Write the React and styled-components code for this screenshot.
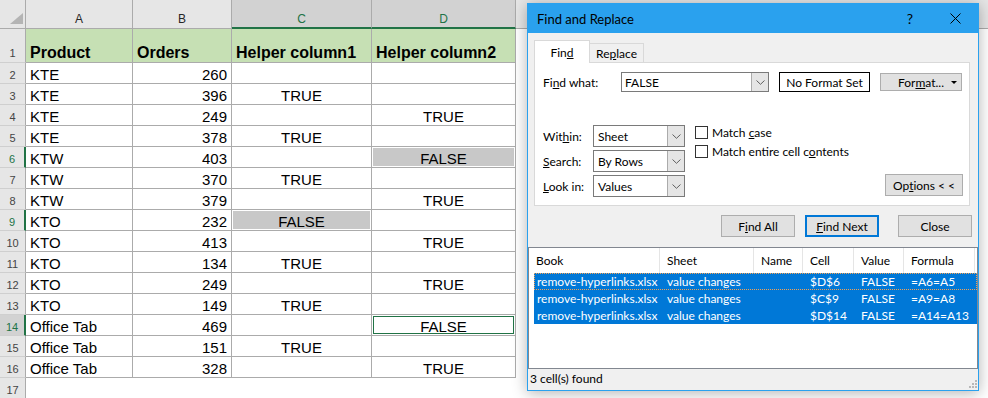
import React from 'react';
import styled, { createGlobalStyle, css } from 'styled-components';

const GlobalStyle = createGlobalStyle`
  html, body {
    margin: 0;
    padding: 0;
    background: #fff;
  }
`;

const Page = styled.div`
  position: relative;
  width: 988px;
  height: 398px;
  overflow: hidden;
  background: #fff;
`;

// ---------- spreadsheet ----------

const Sheet = styled.div`
  display: grid;
  grid-template-columns: 26px 107px 99px 140px 144px 1fr;
  grid-template-rows: 29px 34px repeat(16, 21px);
  font-family: "Liberation Sans", Arial, sans-serif;
  color: #000;
`;

const Corner = styled.div`
  background: #e6e6e6;
  border-right: 1px solid #ababab;
  border-bottom: 1px solid #ababab;
  display: flex;
  align-items: flex-end;
  justify-content: flex-end;
  padding: 0 2px 4px 0;
`;

const ColHead = styled.div`
  background: ${({ $active }) => ($active ? '#d2d2d2' : '#e6e6e6')};
  color: ${({ $active }) => ($active ? '#217346' : '#262626')};
  border-right: ${({ $last }) => ($last ? '0' : '1px solid #ababab')};
  border-bottom: ${({ $active }) =>
    $active ? '2px solid #217346' : '1px solid #ababab'};
  display: flex;
  align-items: center;
  justify-content: center;
  padding-top: 10px;
  font-size: 12px;
  line-height: 12px;
`;

const RowHead = styled.div`
  background: ${({ $current }) => ($current ? '#d2d2d2' : '#e6e6e6')};
  color: ${({ $sel }) => ($sel ? '#217346' : '#444')};
  border-right: ${({ $sel }) =>
    $sel ? '2px solid #217346' : '1px solid #ababab'};
  border-bottom: 1px solid #cfcfcf;
  display: flex;
  align-items: flex-end;
  justify-content: center;
  padding-bottom: ${({ $tall }) => ($tall ? '3px' : '2px')};
  font-size: 11px;
  line-height: 11px;
`;

const Cell = styled.div`
  border-right: 1px solid #ababab;
  border-bottom: 1px solid #ababab;
  background: #fff;
  display: flex;
  align-items: flex-end;
  justify-content: ${({ $align }) =>
    $align === 'right' ? 'flex-end' : $align === 'center' ? 'center' : 'flex-start'};
  padding: 0 4px 1px 4px;
  font-size: 15px;
  line-height: 15px;
  white-space: nowrap;

  ${({ $head }) =>
    $head &&
    css`
      background: #c6e0b4;
      font-weight: bold;
      font-size: 16px;
      line-height: 16px;
      padding-bottom: 1px;
    `}

  ${({ $found }) =>
    $found &&
    css`
      background: #c8c8c8;
      box-shadow: inset 0 0 0 1px #fff;
    `}

  ${({ $active }) =>
    $active &&
    css`
      box-shadow: inset 0 0 0 1px #fff, inset 0 0 0 2px #217346;
    `}
`;

const Blank = styled.div`
  background: #fff;
`;

const SelectAll = () => (
  <svg width="13" height="11" viewBox="0 0 13 11">
    <polygon points="13,0 13,11 0,11" fill="#b4b4b4" />
  </svg>
);

const data = [
  ['KTE', 260, '', ''],
  ['KTE', 396, 'TRUE', ''],
  ['KTE', 249, '', 'TRUE'],
  ['KTE', 378, 'TRUE', ''],
  ['KTW', 403, '', 'FALSE'],
  ['KTW', 370, 'TRUE', ''],
  ['KTW', 379, '', 'TRUE'],
  ['KTO', 232, 'FALSE', ''],
  ['KTO', 413, '', 'TRUE'],
  ['KTO', 134, 'TRUE', ''],
  ['KTO', 249, '', 'TRUE'],
  ['KTO', 149, 'TRUE', ''],
  ['Office Tab', 469, '', 'FALSE'],
  ['Office Tab', 151, 'TRUE', ''],
  ['Office Tab', 328, '', 'TRUE']
];

const selectedRows = [6, 9, 14];

const Spreadsheet = () => (
  <Sheet>
    <Corner>
      <SelectAll />
    </Corner>
    <ColHead>A</ColHead>
    <ColHead>B</ColHead>
    <ColHead $active>C</ColHead>
    <ColHead $active>D</ColHead>
    <ColHead $last />

    <RowHead $tall>1</RowHead>
    <Cell $head>Product</Cell>
    <Cell $head>Orders</Cell>
    <Cell $head>Helper column1</Cell>
    <Cell $head>Helper column2</Cell>
    <Blank />

    {data.map(([product, orders, c, d], i) => {
      const n = i + 2;
      return (
        <React.Fragment key={n}>
          <RowHead $sel={selectedRows.includes(n)} $current={n === 14}>
            {n}
          </RowHead>
          <Cell>{product}</Cell>
          <Cell $align="right">{orders}</Cell>
          <Cell $align="center" $found={n === 9}>
            {c}
          </Cell>
          <Cell $align="center" $found={n === 6} $active={n === 14}>
            {d}
          </Cell>
          <Blank />
        </React.Fragment>
      );
    })}

    <RowHead>17</RowHead>
    <Blank />
    <Blank />
    <Blank />
    <Blank />
    <Blank />
  </Sheet>
);

// ---------- dialog ----------

const Dialog = styled.div`
  position: absolute;
  left: 527px;
  top: 3px;
  width: 452px;
  height: 388px;
  box-sizing: border-box;
  border: 1px solid #2aa1ee;
  background: #f0f0f0;
  box-shadow: 0 2px 14px rgba(0, 0, 0, 0.3);
  display: flex;
  flex-direction: column;
  font-family: Lato, "Noto Sans", sans-serif;
  font-size: 12px;
  color: #000;

  * {
    box-sizing: border-box;
  }
`;

const TitleBar = styled.div`
  height: 29px;
  flex: none;
  background: #2aa1ee;
  display: flex;
  align-items: center;
  padding: 0 17px 0 9px;
`;

const Title = styled.span`
  font-size: 13px;
`;

const TitleIcons = styled.div`
  margin-left: auto;
  display: flex;
  align-items: center;
  gap: 37px;
`;

const Help = styled.span`
  font-size: 14px;
  line-height: 14px;
`;

const Body = styled.div`
  padding: 7px 6px 0 6px;
`;

const Tabs = styled.div`
  display: flex;
  align-items: flex-end;
  height: 22px;
`;

const Tab = styled.div`
  position: relative;
  z-index: ${({ $active }) => ($active ? 1 : 0)};
  width: ${({ $active }) => ($active ? '56px' : '55px')};
  height: ${({ $active }) => ($active ? '23px' : '19px')};
  margin-bottom: ${({ $active }) => ($active ? '-1px' : '0')};
  margin-left: ${({ $active }) => ($active ? '0' : '-1px')};
  background: ${({ $active }) => ($active ? '#fff' : '#f0f0f0')};
  border: 1px solid #d9d9d9;
  border-bottom: 0;
  display: flex;
  align-items: center;
  justify-content: center;
  padding-top: ${({ $active }) => ($active ? '0' : '1px')};
`;

const Panel = styled.div`
  width: 436px;
  height: 144px;
  background: #fff;
  border: 1px solid #d9d9d9;
  padding: 9px 6px 0 8px;
  display: flex;
  flex-direction: column;
`;

const FindRow = styled.div`
  display: flex;
  align-items: center;
  height: 20px;
`;

const FieldLabel = styled.span`
  width: ${({ $w }) => $w || 50}px;
  flex: none;
`;

const Combo = styled.div`
  width: ${({ $w }) => $w}px;
  height: ${({ $h }) => $h}px;
  border: 1px solid #7a7a7a;
  background: #fff;
  display: flex;
  align-items: stretch;
  flex: none;
`;

const ComboText = styled.span`
  flex: 1;
  display: flex;
  align-items: center;
  padding-left: ${({ $pad }) => $pad || 4}px;
`;

const DropBtn = styled.span`
  width: 17px;
  background: #e5e5e5;
  border-left: 1px solid #ababab;
  display: flex;
  align-items: center;
  justify-content: center;
`;

const Chevron = () => (
  <svg width="9" height="5" viewBox="0 0 9 5">
    <path d="M0.5 0.5 L4.5 4.3 L8.5 0.5" fill="none" stroke="#606060" strokeWidth="1" />
  </svg>
);

const FormatBox = styled.div`
  margin-left: 10px;
  width: 91px;
  height: 20px;
  border: 1px solid #000;
  display: flex;
  align-items: center;
  justify-content: center;
`;

const Button = styled.div`
  width: ${({ $w }) => $w || 74}px;
  height: ${({ $h }) => $h || 22}px;
  background: #e1e1e1;
  border: ${({ $default }) => ($default ? '2px solid #0078d7' : '1px solid #adadad')};
  display: flex;
  align-items: center;
  justify-content: center;
  flex: none;
`;

const FormatButton = styled(Button)`
  margin-left: 10px;
  justify-content: space-between;
  padding: 0 4px 0 17px;
`;

const Caret = () => (
  <svg width="6" height="3" viewBox="0 0 6 3">
    <polygon points="0,0 6,0 3,3" fill="#000" />
  </svg>
);

const OptionsArea = styled.div`
  margin-top: 33px;
  display: flex;
  align-items: flex-start;
`;

const SelectGrid = styled.div`
  display: grid;
  grid-template-columns: 50px 92px;
  grid-auto-rows: 22px;
  row-gap: 3px;
  align-items: center;
`;

const Checks = styled.div`
  margin-left: 10px;
  margin-top: 1px;
  display: flex;
  flex-direction: column;
  gap: 6px;
`;

const CheckRow = styled.label`
  display: flex;
  align-items: center;
  gap: 4px;
  height: 13px;
`;

const Box = styled.span`
  width: 13px;
  height: 13px;
  border: 1px solid #333;
  background: #fff;
  flex: none;
`;

const OptionsButton = styled(Button)`
  margin-left: auto;
  margin-top: 49px;
`;

const ButtonRow = styled.div`
  margin-top: 9px;
  display: flex;
  justify-content: flex-end;
`;

const Gap = styled.span`
  width: ${({ $w }) => $w}px;
  flex: none;
`;

const ResultList = styled.div`
  margin-top: 10px;
  height: 122px;
  flex: none;
  background: #fff;
  border: 1px solid #828790;
  display: flex;
  flex-direction: column;
`;

const colWidths = [94, 49, 51, 50];

const ListHead = styled.div`
  display: grid;
  grid-template-columns: 131px ${colWidths.map(w => `${w}px`).join(' ')} 71px;
  height: 25px;
`;

const HeadCell = styled.div`
  border-right: 1px solid #e5e5e5;
  display: flex;
  align-items: center;
  padding-left: 7px;
`;

const ListBody = styled.div`
  padding-left: 5px;
`;

const ResultRow = styled.div`
  display: grid;
  grid-template-columns: 126px ${colWidths.map(w => `${w}px`).join(' ')} 72px;
  height: 17px;
  background: #0078d7;
  color: #fff;
  ${({ $focus }) =>
    $focus &&
    css`
      outline: 1px dotted #f2a255;
      outline-offset: -1px;
    `}
`;

const ResultCell = styled.div`
  display: flex;
  align-items: center;
  padding-left: ${({ $first }) => ($first ? '3px' : '7px')};
  white-space: nowrap;
  overflow: hidden;
`;

const StatusBar = styled.div`
  flex: 1;
  display: flex;
  align-items: center;
  padding: 0 1px 2px 2px;
`;

const Grip = () => (
  <svg width="8" height="8" viewBox="0 0 8 8" style={{ marginLeft: 'auto', alignSelf: 'flex-end' }}>
    <rect x="6" y="0" width="2" height="2" fill="#b8b8b8" />
    <rect x="3" y="3" width="2" height="2" fill="#b8b8b8" />
    <rect x="6" y="3" width="2" height="2" fill="#b8b8b8" />
    <rect x="0" y="6" width="2" height="2" fill="#b8b8b8" />
    <rect x="3" y="6" width="2" height="2" fill="#b8b8b8" />
    <rect x="6" y="6" width="2" height="2" fill="#b8b8b8" />
  </svg>
);

const results = [
  ['remove-hyperlinks.xlsx', 'value changes', '', '$D$6', 'FALSE', '=A6=A5'],
  ['remove-hyperlinks.xlsx', 'value changes', '', '$C$9', 'FALSE', '=A9=A8'],
  ['remove-hyperlinks.xlsx', 'value changes', '', '$D$14', 'FALSE', '=A14=A13']
];

const FindReplaceDialog = () => (
  <Dialog>
    <TitleBar>
      <Title>Find and Replace</Title>
      <TitleIcons>
        <Help>?</Help>
        <svg width="11" height="11" viewBox="0 0 11 11">
          <path d="M0.5 0.5 L10.5 10.5 M10.5 0.5 L0.5 10.5" stroke="#000" strokeWidth="1" />
        </svg>
      </TitleIcons>
    </TitleBar>

    <Body>
      <Tabs>
        <Tab $active>
          Fin<u>d</u>
        </Tab>
        <Tab>
          Re<u>p</u>lace
        </Tab>
      </Tabs>
      <Panel>
        <FindRow>
          <FieldLabel $w={78}>
            Fi<u>n</u>d what:
          </FieldLabel>
          <Combo $w={148} $h={20}>
            <ComboText $pad={3}>FALSE</ComboText>
            <DropBtn>
              <Chevron />
            </DropBtn>
          </Combo>
          <FormatBox>No Format Set</FormatBox>
          <FormatButton $w={82} $h={18}>
            <span>
              For<u>m</u>at...
            </span>
            <Caret />
          </FormatButton>
        </FindRow>

        <OptionsArea>
          <SelectGrid>
            <FieldLabel>
              Wit<u>h</u>in:
            </FieldLabel>
            <Combo $w={92} $h={22}>
              <ComboText>Sheet</ComboText>
              <DropBtn>
                <Chevron />
              </DropBtn>
            </Combo>
            <FieldLabel>
              <u>S</u>earch:
            </FieldLabel>
            <Combo $w={92} $h={22}>
              <ComboText>By Rows</ComboText>
              <DropBtn>
                <Chevron />
              </DropBtn>
            </Combo>
            <FieldLabel>
              <u>L</u>ook in:
            </FieldLabel>
            <Combo $w={92} $h={22}>
              <ComboText>Values</ComboText>
              <DropBtn>
                <Chevron />
              </DropBtn>
            </Combo>
          </SelectGrid>

          <Checks>
            <CheckRow>
              <Box />
              <span>
                Match <u>c</u>ase
              </span>
            </CheckRow>
            <CheckRow>
              <Box />
              <span>
                Match entire cell c<u>o</u>ntents
              </span>
            </CheckRow>
          </Checks>

          <OptionsButton $w={78}>
            Op<u>t</u>ions &lt; &lt;
          </OptionsButton>
        </OptionsArea>
      </Panel>

      <ButtonRow>
        <Button>
          F<u>i</u>nd All
        </Button>
        <Gap $w={10} />
        <Button $default>
          <u>F</u>ind Next
        </Button>
        <Gap $w={19} />
        <Button>Close</Button>
      </ButtonRow>
    </Body>

    <ResultList>
      <ListHead>
        <HeadCell>Book</HeadCell>
        <HeadCell>Sheet</HeadCell>
        <HeadCell>Name</HeadCell>
        <HeadCell>Cell</HeadCell>
        <HeadCell>Value</HeadCell>
        <HeadCell>Formula</HeadCell>
      </ListHead>
      <ListBody>
        {results.map((r, i) => (
          <ResultRow key={r[3]} $focus={i === 0}>
            {r.map((v, j) => (
              <ResultCell key={j} $first={j === 0}>
                {v}
              </ResultCell>
            ))}
          </ResultRow>
        ))}
      </ListBody>
    </ResultList>

    <StatusBar>
      <span>3 cell(s) found</span>
      <Grip />
    </StatusBar>
  </Dialog>
);

const App = () => (
  <Page>
    <GlobalStyle />
    <Spreadsheet />
    <FindReplaceDialog />
  </Page>
);

export default App;
